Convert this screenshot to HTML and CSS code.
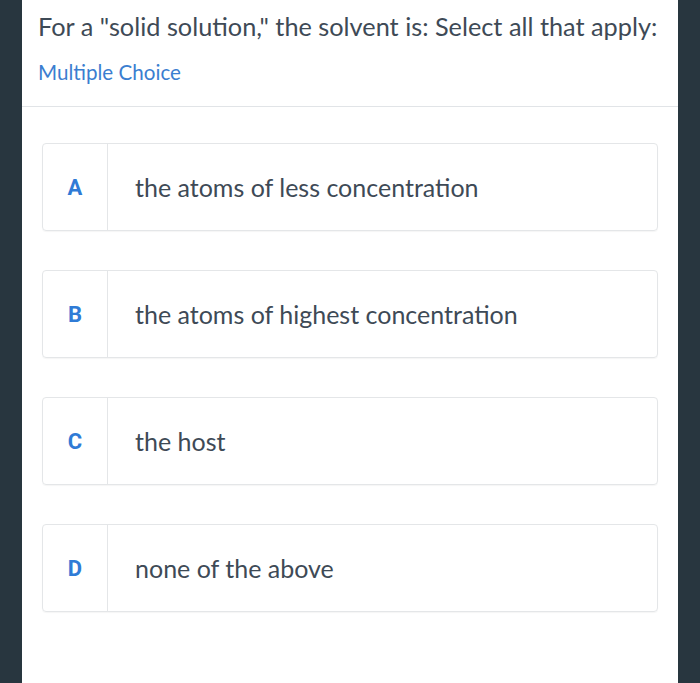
FILE: index.html
```html
<!DOCTYPE html>
<html>
<head>
<meta charset="utf-8">
<link rel="stylesheet" href="styles.css">
</head>
<body>
<div class="page">
  <div class="header">
    <div class="title">For a "solid solution," the solvent is: Select all that apply:</div>
    <div class="subtitle">Multiple Choice</div>
  </div>
  <div class="choices">
    <div class="choice"><div class="letter">A</div><div class="text">the atoms of less concentration</div></div>
    <div class="choice"><div class="letter">B</div><div class="text">the atoms of highest concentration</div></div>
    <div class="choice"><div class="letter">C</div><div class="text">the host</div></div>
    <div class="choice"><div class="letter">D</div><div class="text">none of the above</div></div>
  </div>
</div>
</body>
</html>
```
FILE: styles.css
```css
html, body {
  margin: 0;
  padding: 0;
  background: #28363f;
  height: 100%;
}
.page {
  margin: 0 22px;
  background: #ffffff;
  min-height: 100vh;
  font-family: "Lato", "Open Sans", sans-serif;
  color: #3e4a56;
}
.header {
  padding: 10px 16px 0 16px;
  height: 96px;
  border-bottom: 1px solid #e1e4e7;
  box-sizing: content-box;
}
.title {
  font-size: 25.3px;
  line-height: 32px;
}
.subtitle {
  margin-top: 18px;
  font-size: 20.6px;
  line-height: 24px;
  color: #3b7ed0;
}
.choices {
  padding: 36px 20px 0 20px;
  display: flex;
  flex-direction: column;
  gap: 39px;
}
.choice {
  display: flex;
  height: 88px;
  box-sizing: border-box;
  border: 1px solid #e4e6e8;
  border-radius: 4px;
  box-shadow: 0 1px 1px rgba(0,0,0,0.04);
}
.letter {
  width: 64px;
  flex: none;
  border-right: 1px solid #e4e6e8;
  display: flex;
  align-items: center;
  justify-content: center;
  font-family: "Roboto", "Liberation Sans", sans-serif;
  font-weight: 700;
  font-size: 22px;
  color: #2f7bd6;
}
.text {
  display: flex;
  align-items: center;
  padding-left: 27px;
  font-size: 25px;
}
```
